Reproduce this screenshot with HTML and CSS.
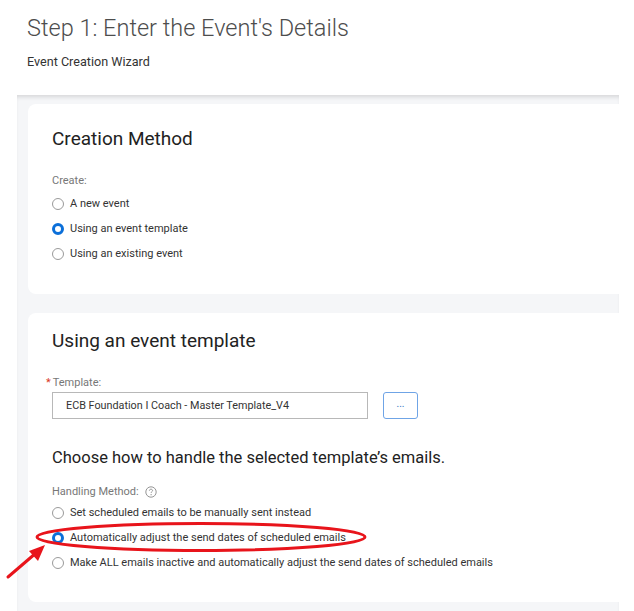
FILE: index.html
```html
<!DOCTYPE html>
<html lang="en">

<head>
    <meta charset="utf-8" />
    <title>Step 1: Enter the Event's Details</title>
    <link rel="stylesheet" href="styles.css">
</head>

<body>
    <header class="page-head">
        <h1 class="page-title">Step 1: Enter the Event's Details</h1>
        <div class="page-sub">Event Creation Wizard</div>
    </header>

    <div class="panel">
        <section class="card card-method">
            <h2 class="card-title">Creation Method</h2>
            <div class="field-label">Create:</div>
            <div class="radio-list">
                <label class="radio-row"><input type="radio" name="create"> A new event</label>
                <label class="radio-row"><input type="radio" name="create" checked> Using an event template</label>
                <label class="radio-row"><input type="radio" name="create"> Using an existing event</label>
            </div>
        </section>

        <section class="card card-template">
            <h2 class="card-title">Using an event template</h2>
            <div class="field-label required"><span class="star">*</span>Template:</div>
            <div class="template-row">
                <div class="text-box">ECB Foundation I Coach - Master Template_V4</div>
                <button class="pick-btn">...</button>
            </div>

            <h3 class="sub-title">Choose how to handle the selected template’s emails.</h3>
            <div class="field-label help-label">Handling Method:
                <svg class="help-icon" width="12" height="12" viewBox="0 0 12 12">
                    <circle cx="6" cy="6" r="5.2" fill="none" stroke="#8a8a8a" stroke-width="0.9" />
                    <path d="M4.4 4.7 C4.4 3.7 5.1 3.2 6 3.2 C6.9 3.2 7.6 3.8 7.6 4.6 C7.6 5.6 6.1 5.7 6.1 6.9" fill="none" stroke="#8a8a8a" stroke-width="0.9" />
                    <circle cx="6.1" cy="8.7" r="0.6" fill="#8a8a8a" />
                </svg>
            </div>
            <div class="radio-list tight">
                <label class="radio-row"><input type="radio" name="handle"> Set scheduled emails to be manually sent instead</label>
                <label class="radio-row"><input type="radio" name="handle" checked> Automatically adjust the send dates of scheduled emails</label>
                <label class="radio-row"><input type="radio" name="handle"> Make ALL emails inactive and automatically adjust the send dates of scheduled emails</label>
            </div>
        </section>
    </div>

    <!-- red annotation drawn over the screenshot -->
    <svg class="markup" width="634" height="611" viewBox="0 0 634 611">
        <ellipse cx="201" cy="537" rx="164" ry="13.5" fill="none" stroke="#e8141b" stroke-width="3" />
        <line x1="8" y1="577" x2="36" y2="553" stroke="#e8141b" stroke-width="3" stroke-linecap="round" />
        <polygon points="45,545 29,551 38,561" fill="#e8141b" />
    </svg>
</body>

</html>
```

FILE: styles.css
```css
body {
    margin: 0;
    background-color: white;
    font-family: Roboto, "Liberation Sans", sans-serif;
    color: #333;
    position: relative;
    height: 611px;
    overflow: hidden;
}

.page-head {
    padding: 13px 0 0 27px;
    height: 81px;
    box-sizing: border-box;
}

.page-title {
    margin: 0;
    font-size: 23.5px;
    font-weight: 300;
    line-height: 30px;
    color: #4d4d4d;
}

.page-sub {
    margin-top: 11px;
    font-size: 12.6px;
    line-height: 16px;
    color: #333;
}

.panel {
    margin: 14px 0 0 17px;
    width: 602px;
    height: 516px;
    background-color: #f5f6f8;
    box-shadow: inset 0 4px 4px -2px rgba(0, 0, 0, 0.13);
    padding: 9px 0 0 11px;
    box-sizing: border-box;
    display: flex;
    flex-direction: column;
    gap: 19px;
    overflow: hidden;
}

.card {
    background-color: white;
    border-radius: 8px 0 0 8px;
    padding-left: 24px;
    margin-right: -20px;
    flex-shrink: 0;
}

.card-method {
    height: 190px;
    padding-top: 23px;
    box-sizing: border-box;
}

.card-template {
    height: 289px;
    padding-top: 16px;
    box-sizing: border-box;
}

.card-title {
    margin: 0;
    font-size: 19px;
    font-weight: 400;
    line-height: 24px;
    color: #222;
}

.field-label {
    margin-top: 22px;
    font-size: 11px;
    line-height: 16px;
    color: #777;
}

.required {
    margin-left: -6px;
}

.star {
    color: #d9381e;
    margin-right: 2px;
}

.radio-list {
    margin-top: 2px;
}

.radio-list.tight {
    margin-top: 0;
}

.radio-row {
    display: flex;
    align-items: center;
    height: 25px;
    font-size: 11px;
    color: #333;
}

.radio-row input {
    appearance: none;
    margin: 0 6px 0 0;
    width: 12px;
    height: 12px;
    border: 1px solid #9a9a9a;
    border-radius: 50%;
    background-color: white;
}

.radio-row input:checked {
    border: 3.5px solid #0b6fd9;
    background-color: white;
}

.template-row {
    display: flex;
    gap: 15px;
    margin-top: 1px;
}

.text-box {
    width: 316px;
    height: 27px;
    box-sizing: border-box;
    border: 1px solid #b8b8b8;
    padding-left: 13px;
    font-size: 10.8px;
    line-height: 25px;
    color: #333;
}

.pick-btn {
    width: 35px;
    height: 27px;
    background-color: white;
    border: 1px solid #6fa4e6;
    border-radius: 3px;
    color: #2f72c4;
    font-size: 10px;
    font-family: inherit;
    padding: 0 0 4px;
}

.sub-title {
    margin: 28px 0 0;
    font-size: 16.5px;
    font-weight: 400;
    line-height: 22px;
    color: #222;
}

.help-label {
    display: flex;
    align-items: center;
    gap: 6px;
    margin-top: 15px;
}

.markup {
    position: absolute;
    top: 0;
    left: 0;
    pointer-events: none;
}
```
